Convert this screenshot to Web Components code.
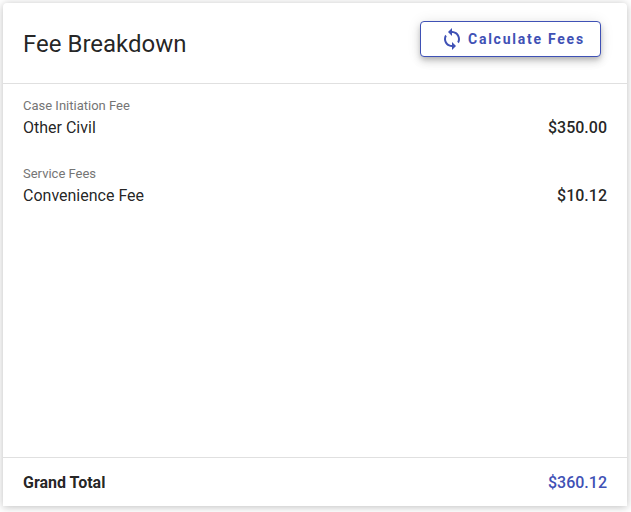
<!DOCTYPE html>
<html><head><meta charset="utf-8"><style>
html,body{margin:0;padding:0;background:#fff}
body{padding:3px 4px 6px 3px;height:512px;box-sizing:border-box;font-family:Roboto,sans-serif;color:rgba(0,0,0,.87)}
</style></head><body>
<fee-card>
<span slot="title">Fee Breakdown</span>
<calc-button slot="action">Calculate Fees</calc-button>
<fee-row label="Case Initiation Fee" name="Other Civil" amount="$350.00"></fee-row>
<fee-row label="Service Fees" name="Convenience Fee" amount="$10.12"></fee-row>
<span slot="total-label">Grand Total</span>
<span slot="total">$360.12</span>
</fee-card>
<script>
class FeeCard extends HTMLElement{constructor(){super();this.attachShadow({mode:'open'}).innerHTML=`<style>
:host{display:flex;flex-direction:column;height:100%;background:#fff;border-radius:4px 4px 0 0;box-shadow:0 1px 8px 0 rgba(0,0,0,.26)}
header{display:flex;align-items:flex-start;justify-content:space-between;height:81px;box-sizing:border-box;padding:18px 26px 0 20px;border-bottom:1px solid #e0e0e0;flex:none}
.t{font-size:24px;line-height:32px;font-weight:400;color:rgba(0,0,0,.87);margin-top:7px}
main{flex:1;padding:14px 20px 0 20px;display:flex;flex-direction:column;gap:26px}
footer{flex:none;height:49px;box-sizing:border-box;border-top:1px solid #e0e0e0;padding:2px 20px 0 20px;display:flex;align-items:center;justify-content:space-between;font-size:16px;line-height:24px}
.l{font-weight:700}.v{font-weight:500;color:#3f51b5}
</style><header><div class="t"><slot name="title"></slot></div><slot name="action"></slot></header><main><slot></slot></main><footer><span class="l"><slot name="total-label"></slot></span><span class="v"><slot name="total"></slot></span></footer>`}}
class CalcButton extends HTMLElement{constructor(){super();this.attachShadow({mode:'open'}).innerHTML=`<style>
:host{display:inline-flex;align-items:center;box-sizing:border-box;width:181px;height:36px;border:1px solid #3f51b5;border-radius:4px;background:#fff;color:#3f51b5;font-size:14px;font-weight:700;letter-spacing:1.75px;padding-left:19px;gap:4px;box-shadow:0 3px 5px -1px rgba(0,0,0,.18),0 5px 8px 0 rgba(0,0,0,.12),0 1px 14px 0 rgba(0,0,0,.1)}
svg{width:24px;height:24px;fill:currentColor;flex:none}
</style><svg viewBox="0 0 24 24"><path d="M12 4V1L8 5l4 4V6c3.31 0 6 2.69 6 6 0 1.01-.25 1.97-.7 2.8l1.46 1.46C19.54 15.03 20 13.57 20 12c0-4.42-3.58-8-8-8zm0 14c-3.31 0-6-2.69-6-6 0-1.01.25-1.97.7-2.8L5.24 7.74C4.46 8.97 4 10.43 4 12c0 4.42 3.58 8 8 8v3l4-4-4-4v3z"/></svg><slot></slot>`}}
class FeeRow extends HTMLElement{constructor(){super();this.attachShadow({mode:'open'}).innerHTML=`<style>
:host{display:block}
.c{font-size:13px;line-height:16px;color:#757575;margin-bottom:2px}
.r{display:flex;justify-content:space-between;font-size:16px;line-height:24px}
.a{font-weight:500}
</style><div class="c"></div><div class="r"><span class="n"></span><span class="a"></span></div>`;}
connectedCallback(){const s=this.shadowRoot;s.querySelector('.c').textContent=this.getAttribute('label');s.querySelector('.n').textContent=this.getAttribute('name');s.querySelector('.a').textContent=this.getAttribute('amount')}}
customElements.define('fee-card',FeeCard);customElements.define('calc-button',CalcButton);customElements.define('fee-row',FeeRow);
</script>
</body></html>
